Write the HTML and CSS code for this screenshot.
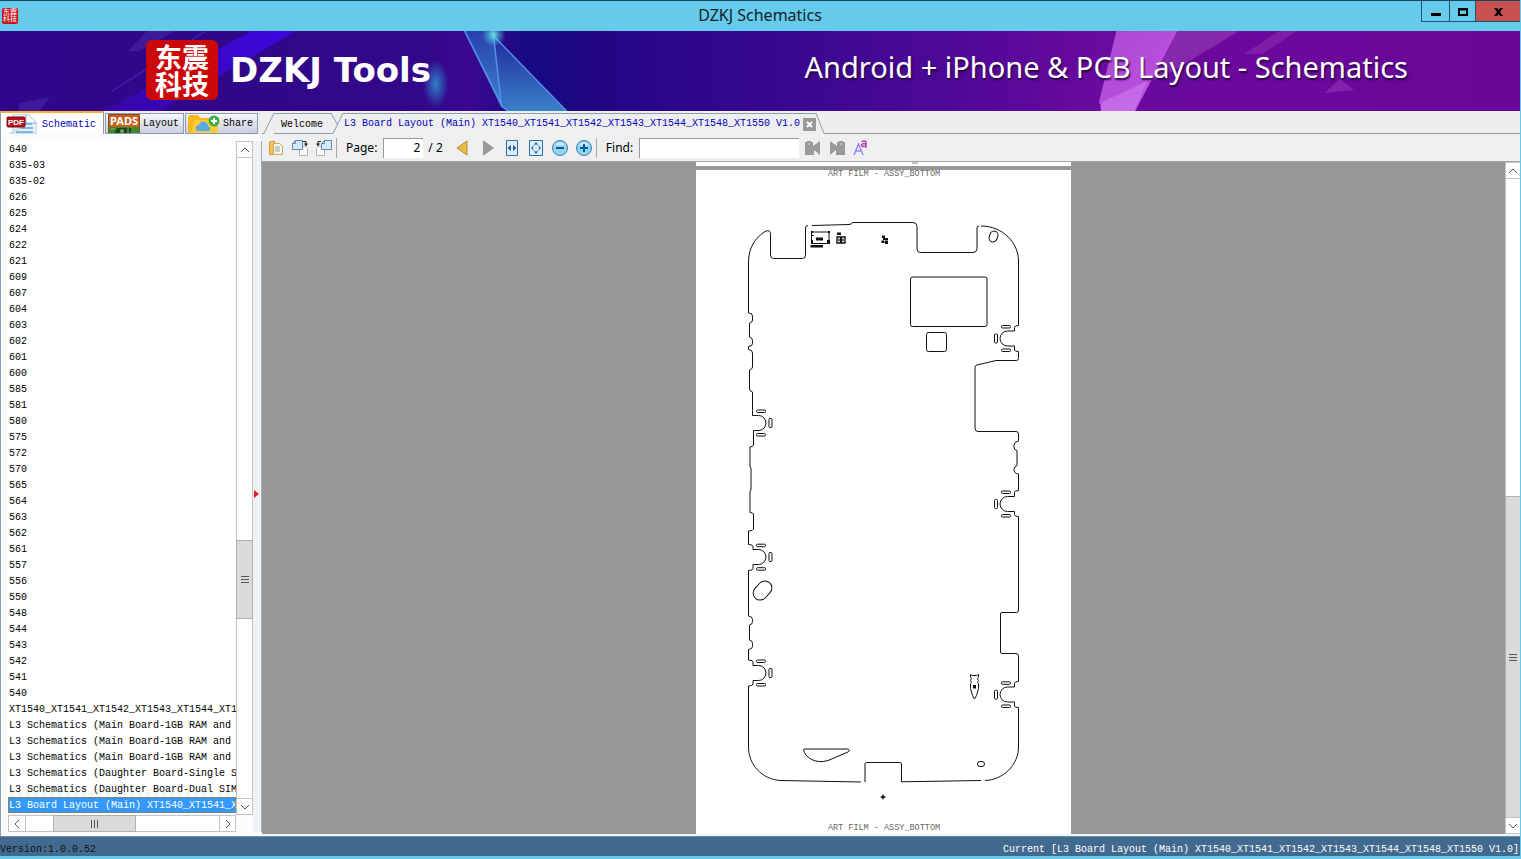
FILE: index.html
```html
<!DOCTYPE html>
<html lang="en">
<head>
<meta charset="utf-8">
<title>DZKJ Schematics</title>
<link rel="stylesheet" href="styles.css">
</head>
<body>
<div class="app">
  <header class="titlebar">
    <span class="app-icon" aria-hidden="true">东震科技</span>
    <h1 class="title">DZKJ Schematics</h1>
    <div class="window-buttons">
      <button class="win min" aria-label="Minimize"><svg width="10" height="9"><path d="M0 6h10v3H0z"/></svg></button>
      <button class="win max" aria-label="Maximize"><svg width="10" height="9"><path d="M0 1h10v8H0zM2 3.500v3.500h6v-3.500z" fill-rule="evenodd"/></svg></button>
      <button class="win close" aria-label="Close"><svg width="9" height="9"><path d="M0 1h3l1.500 2L6 1h3L6 5l3 4H6L4.500 7 3 9H0l3-4z"/></svg></button>
    </div>
  </header>

  <section class="banner">
    <svg class="banner-art" viewBox="0 0 1521 80" preserveAspectRatio="none" aria-hidden="true">
      <defs>
        <linearGradient id="base"><stop offset="0" stop-color="#30078a"/><stop offset=".28" stop-color="#32078a"/><stop offset=".31" stop-color="#3a0890"/><stop offset=".35" stop-color="#160a82"/><stop offset=".39" stop-color="#220684"/><stop offset=".46" stop-color="#2f078c"/><stop offset=".53" stop-color="#3a0890"/><stop offset=".64" stop-color="#520898"/><stop offset=".72" stop-color="#6a0a9e"/><stop offset="1" stop-color="#6a0798"/></linearGradient>
        <linearGradient id="beam" x1="1" y1="0" x2="0" y2="1"><stop offset="0" stop-color="#3e06de"/><stop offset="1" stop-color="#3606a8"/></linearGradient>
        <linearGradient id="shard" x1="0" y1="0" x2="0" y2="1"><stop offset="0" stop-color="#2b3fae"/><stop offset="1" stop-color="#3a86cc"/></linearGradient>
        <linearGradient id="wing" x1="0" y1="0" x2="0" y2="1"><stop offset="0" stop-color="#202a9c"/><stop offset="1" stop-color="#3a80c8"/></linearGradient>
        <linearGradient id="pink" x1="0" y1="0" x2="1" y2="1"><stop offset="0" stop-color="#a948d0"/><stop offset=".6" stop-color="#b94fdc"/><stop offset="1" stop-color="#c96af2"/></linearGradient>
        <radialGradient id="glow"><stop offset="0" stop-color="#2d7fc6"/><stop offset="1" stop-color="#2d7fc6" stop-opacity="0"/></radialGradient>
        <radialGradient id="spark"><stop offset="0" stop-color="#67e3e6"/><stop offset="1" stop-color="#3fb8d8" stop-opacity="0"/></radialGradient>
      </defs>
      <path fill="url(#base)" d="M0 0h1521v80H0z"/>
      <path fill="url(#beam)" d="M252 0h44L160 80H104z"/>
      <path fill="#3e1a98" d="M147 0h28l-35 20h-12zM20 72l30-6-10 14H18z"/>
      <path stroke="#4430b4" fill="none" d="M206 0L112 60"/>
      <ellipse cx="436" cy="53" rx="13" ry="24" fill="url(#glow)"/>
      <path fill="url(#shard)" d="M464 0h29l9 77z"/>
      <path fill="url(#wing)" d="M494 5l73 75h-58l-7-4z"/>
      <path fill="none" stroke="#5790ec" stroke-width="1.500" d="M464-2l39 78 8 6M493-2l9 78M494 5l73 75"/>
      <circle cx="494" cy="4" r="12" fill="url(#spark)"/>
      <path fill="#9a3db8" opacity=".6" d="M1176 0h64l-78 47-40 12z"/>
      <path fill="#8d2bb0" opacity=".6" d="M1280 0h18l-35 23h-18z"/>
      <path fill="url(#pink)" stroke="#b455d8" d="M1118-1h60l-43 82h-33v-9h-2z"/>
      <path fill="#cb7cf0" opacity=".6" d="M1101 72l47-22-13 30h-33z"/>
      <path fill="#8420ac" d="M1341 48l14 11-30 3z"/>
    </svg>
    <div class="brand">
      <span class="brand-seal">东震科技</span>
      <span class="brand-name">DZKJ Tools</span>
    </div>
    <p class="tagline">Android + iPhone &amp; PCB Layout - Schematics</p>
  </section>

  <main class="workspace">
    <aside class="side">
      <nav class="side-tabs">
        <button class="side-tab active">
          <svg width="34" height="20" viewBox="0 0 34 20" aria-hidden="true"><path d="M8 0h15l8 8v12H8z" fill="#e8f1fa" stroke="#b4cce0"/><path d="M21 0v9h10" fill="#fff" stroke="#85b2d8"/><path d="M17 10h10M14 14h14M11 18h17" stroke="#7cb8e0" stroke-width="2"/><path d="M4 20l14-8" stroke="#cfdfea" stroke-width="2"/><rect x="2" y="3" width="18" height="10" rx="1" fill="#b4131a" stroke="#7f0d12"/><text x="3" y="11" class="icon-pdf">PDF</text></svg>
          <span>Schematic</span>
        </button>
        <button class="side-tab">
          <svg width="32" height="19" viewBox="0 0 32 19" aria-hidden="true"><path d="M.500.500h31V19H.500z" fill="#c4601c" stroke="#8e4a1a"/><path d="M1 13h30v6H1z" fill="#3c8a2c"/><path d="M6 19l3-5h16v5z" fill="#24441e"/><circle cx="14" cy="17" r="2" fill="#58b840"/><path d="M20 14v5M24 13v6M3 15h4" stroke="#68c44c"/><text x="2" y="11" class="icon-pads">PADS</text></svg>
          <span>Layout</span>
        </button>
        <button class="side-tab">
          <svg width="32" height="19" viewBox="0 0 32 19" aria-hidden="true"><path d="M0 3q0-2 2-2h8l3 3h12q2 0 2 2v13H2q-2 0-2-2z" fill="#f7b51e"/><path d="M3 19L6 6h24v13z" fill="#fccb3c"/><path d="M10 17q-3-1-2-4 1-2 3-2 2-5 6-3 3 1 3 4 3 1 2 4l-1 1z" fill="#58a9e8"/><circle cx="26" cy="7" r="5.500" fill="#3fae49"/><path d="M23 7h6M26 4v6" stroke="#fff" stroke-width="2"/></svg>
          <span>Share</span>
        </button>
      </nav>
      <div class="side-body">
        <div class="list-area">
          <ul class="list">
            <li><button>640</button></li><li><button>635-03</button></li><li><button>635-02</button></li><li><button>626</button></li><li><button>625</button></li><li><button>624</button></li><li><button>622</button></li><li><button>621</button></li><li><button>609</button></li><li><button>607</button></li><li><button>604</button></li><li><button>603</button></li><li><button>602</button></li><li><button>601</button></li><li><button>600</button></li><li><button>585</button></li><li><button>581</button></li><li><button>580</button></li><li><button>575</button></li><li><button>572</button></li><li><button>570</button></li><li><button>565</button></li><li><button>564</button></li><li><button>563</button></li><li><button>562</button></li><li><button>561</button></li><li><button>557</button></li><li><button>556</button></li><li><button>550</button></li><li><button>548</button></li><li><button>544</button></li><li><button>543</button></li><li><button>542</button></li><li><button>541</button></li><li><button>540</button></li>
            <li><button>XT1540_XT1541_XT1542_XT1543_XT1544_XT1</button></li>
            <li><button>L3 Schematics (Main Board-1GB RAM and</button></li>
            <li><button>L3 Schematics (Main Board-1GB RAM and</button></li>
            <li><button>L3 Schematics (Main Board-1GB RAM and</button></li>
            <li><button>L3 Schematics (Daughter Board-Single S</button></li>
            <li><button>L3 Schematics (Daughter Board-Dual SIM</button></li>
            <li><button class="selected">L3 Board Layout (Main) XT1540_XT1541_X</button></li>
          </ul>
          <div class="hscroll">
            <button aria-label="Scroll left"><svg width="8" height="10"><path d="M6 1L2 5l4 4"/></svg></button>
            <span class="track h-before"></span><span class="thumb h-thumb"><svg width="9" height="8"><path d="M1.500 0v8M4.500 0v8M7.500 0v8"/></svg></span><span class="track h-after"></span>
            <button aria-label="Scroll right"><svg width="8" height="10"><path d="M2 1l4 4-4 4"/></svg></button>
          </div>
        </div>
        <div class="vscroll side-scroll">
          <button aria-label="Scroll up"><svg width="10" height="8"><path d="M1 6l4-4 4 4"/></svg></button>
          <span class="track s-before"></span><span class="thumb s-thumb"><svg width="8" height="9"><path d="M0 1.500h8M0 4.500h8M0 7.500h8"/></svg></span><span class="track s-after"></span>
          <button aria-label="Scroll down"><svg width="10" height="8"><path d="M1 2l4 4 4-4"/></svg></button>
        </div>
        <div class="splitter"><svg width="5" height="8" aria-hidden="true"><path d="M0 0l5 4-5 4z"/></svg></div>
      </div>
    </aside>

    <section class="document">
      <div class="doc-tabs">
        <svg class="slope" width="12" height="22" aria-hidden="true"><path d="M0 21.500h2L12 1"/></svg>
        <button class="doc-tab welcome">Welcome</button>
        <svg class="slope" width="12" height="22" aria-hidden="true"><path d="M0 1l6 11M12 1L2 21.500H0"/></svg>
        <div class="doc-tab current">
          <button class="doc-name">L3 Board Layout (Main) XT1540_XT1541_XT1542_XT1543_XT1544_XT1548_XT1550 V1.0</button>
          <button class="tab-close" aria-label="Close tab"><svg width="7" height="7"><path d="M1 1l5 5M6 1L1 6"/></svg></button>
        </div>
        <svg class="slope" width="10" height="22" aria-hidden="true"><path d="M0 1l8 20.500h2"/></svg>
        <span class="tab-fill"></span>
      </div>

      <div class="toolbar">
        <button class="tool" aria-label="Open"><svg width="16" height="16"><path d="M1.500 2l5-1 1 13-6 1z" fill="#f2c25c" stroke="#d39a35"/><path d="M5.500 3.500h6l3 3v8h-9z" fill="#fbf5e4" stroke="#c9a566"/><path d="M7 7h5M7 9h5M7 11h5" stroke="#8aa"/></svg></button>
        <button class="tool" aria-label="Rotate clockwise"><svg width="16" height="16"><path d="M7.500 6.500h6l2 2v7h-8z" fill="#fff" stroke="#b4b4b4"/><path d="M3.500.500h7v9h-10v-6z" fill="#d6eafc" stroke="#5d87b5"/><path d="M.500 3.500h3v-3" fill="none" stroke="#5d87b5"/><path d="M11 1.500h3V4" stroke="#222" fill="none"/><path d="M12 3.500h4l-2 3z" fill="#222"/></svg></button>
        <button class="tool" aria-label="Rotate counterclockwise"><svg width="16" height="16"><path d="M.500 8.500l2-2h6v9h-8z" fill="#fff" stroke="#b4b4b4"/><path d="M8.500.500h7v9h-10v-6z" fill="#d6eafc" stroke="#5d87b5"/><path d="M5.500 3.500h3v-3" fill="none" stroke="#5d87b5"/><path d="M5 1.500H2V4" stroke="#222" fill="none"/><path d="M0 3.500h4l-2 3z" fill="#222"/></svg></button>
        <span class="divider"></span>
        <label for="page">Page:</label>
        <input id="page" class="page-box" value="2">
        <span class="page-total">/ 2</span>
        <button class="tool" aria-label="Previous page"><svg width="16" height="16"><path d="M11 1v14L1 8z" fill="#e9bd48" stroke="#b98a22"/></svg></button>
        <button class="tool" aria-label="Next page"><svg width="16" height="16"><path d="M3 0l11 8L3 16z" fill="#999"/></svg></button>
        <button class="tool" aria-label="Fit width"><svg width="16" height="16"><path d="M2.500.500h11v15h-11z" fill="#dcefff" stroke="#336ea5"/><path d="M7 5v6L3.500 8zM9 5v6l3.500-3z" fill="#205f98"/></svg></button>
        <button class="tool" aria-label="Fit page"><svg width="16" height="16"><path d="M1.500.500h13v15h-13z" fill="#dcefff" stroke="#336ea5"/><path d="M8 2l2 2.500H6zM8 14l2-2.500H6zM3 8l2-2v4zM13 8l-2-2v4z" fill="#205f98"/><circle cx="8" cy="8" r="3.500" fill="none" stroke="#4e8abb" stroke-dasharray="2 1"/></svg></button>
        <button class="tool" aria-label="Zoom out"><svg width="16" height="16"><circle cx="8" cy="8" r="7.500" fill="#92d3f6" stroke="#397fae"/><path d="M3 5a6 5 0 0 1 10 0" fill="#d3effc"/><path d="M4 8h8" stroke="#0b5b91" stroke-width="2"/></svg></button>
        <button class="tool" aria-label="Zoom in"><svg width="16" height="16"><circle cx="8" cy="8" r="7.500" fill="#92d3f6" stroke="#397fae"/><path d="M3 5a6 5 0 0 1 10 0" fill="#d3effc"/><path d="M4 8h8M8 4v8" stroke="#0b5b91" stroke-width="2"/></svg></button>
        <span class="divider"></span>
        <label for="find">Find:</label>
        <input id="find" class="find-box">
        <button class="tool" aria-label="Find previous"><svg width="16" height="16"><path d="M0 2h2V1h4v1h2v4l7-5v14l-6-5v5H0z" fill="#999"/><path d="M3 4h2" stroke="#ddd"/></svg></button>
        <button class="tool" aria-label="Find next"><svg width="16" height="16"><path d="M1 1l7 5V2h2V1h4v1h2v13H7v-5l-6 5z" fill="#999"/><path d="M11 4h2" stroke="#ddd"/></svg></button>
        <button class="tool" aria-label="Match case"><svg width="16" height="16"><path d="M1 15L5.500 4 10 15M3 11h5" fill="none" stroke="#9188f0" stroke-width="1.500"/><path d="M8.500 2q3-2 4.500 0v6M13 4q-5-1-4.500 1.500 1.500 2 4.500 0" fill="none" stroke="#bd3fb0" stroke-width="1.500"/></svg></button>
      </div>

      <div class="viewer">
        <div class="pages">
          <div class="page previous"><svg width="6" height="2" aria-hidden="true"><path d="M0 1h6" stroke="#888"/></svg></div>
          <svg class="page sheet" viewBox="0 0 750 1328" preserveAspectRatio="xMidYMin meet" role="img" aria-label="Board assembly, bottom side">
            <text class="film" x="376" y="11">ART FILM - ASSY_BOTTOM</text>
            <text class="film" x="376" y="1319">ART FILM - ASSY_BOTTOM</text>
            <g class="board" transform="scale(2) translate(-696 -170)">
              <path d="M748.500 313V262C748.500 248 755 238 765 231.500q5-2.500 5.500 2V255q0 3.500 3 3.500h29q3 0 3-3V228q0-2.500 2.500-2.500M812 225.500l37-1q3 0 3.500-2H913q4 0 4 4V249q0 3.500 3.500 3.500H973q4 0 4-4V228q0-2 2-2"/>
              <path d="M981 226C1003 226 1018.500 243 1018.500 261V325.500q-4 0-4 2v3.500h-7a7.500 7.500 0 0 0 0 15h7v4q0 1.500 4 1.500v7q0 2-2 2H996L977 365q-2 .5-2 2.500V428q0 3.500 3 3.500h38q2.500 0 2.500 2.500v7q-4.500 1-4.500 4v2q0 3 3 3.500v15q-3 1-3 4 0 4 4.500 4.500V490.500q-4 0-4 2v4h-7a7.500 7.500 0 0 0 0 15h7v3q0 2 4 2V610q0 2.500-2 2.500H1002q-1.500 0-1.500 1.500V652q0 1.500 1.500 1.500h14q2.500 0 2.500 2.500V681.500q-4 0-4 2v3.500h-7a7.500 7.500 0 0 0 0 15h7v4q0 1.500 4 1.500V747C1018.500 765 1003 780 985 780.500"/>
              <path d="M981 780.500L901.500 781.800V764q0-1.500-2-1.500H866.500q-1.500 0-1.500 1.500V782M861 782L780 780.500C762 779 748.500 765 748.500 747V686q4 0 4.500-2v-3.500h5.500a7.500 7.500 0 0 0 0-15h-5.500v-3.500q0-2-4.500-2V649.500q4-.5 4-3v-3q0-3-3-3.500v-15q3-.5 3-3.500v-2q0-3-4-3.500V570.500q4.500 0 4.500-2v-4h5.500a7.500 7.500 0 0 0 0-15h-5.500v-3q0-2-4.500-2V531q4.500 0 5-2V514q0-1-3.500-1.500V491l1-1V468l-1-1V447q3.500-.5 3.500-2V430.500h5a7.500 7.500 0 0 0 0-15h-6v-5L752.500 392q-3-1-3-3V370q3-1 3-3V353q0-3-4-3.500v-3q4 0 4-3v-3q0-3-3-3.500v-14q3-.5 3-3v-4q0-3-4-3"/>
              <rect x="910.500" y="277" width="76.500" height="49.500" rx="2"/>
              <rect x="926.500" y="332.500" width="20" height="19" rx="2"/>
              <rect x="989.500" y="231" width="8" height="11" rx="4" transform="rotate(20 993.500 236.500)"/>
              <rect x="755.500" y="580" width="14" height="21" rx="7" transform="rotate(42 762.500 590.500)"/>
              <path d="M804 749H848q3 1 0 3L828 760.500C815 764.500 805 757 803.500 750q0-1 .5-1z"/>
              <rect x="977.500" y="761.500" width="7" height="5" rx="2.500"/>
              <g>
                <rect x="756.500" y="410" width="9" height="2.500" rx="1"/><rect x="756.500" y="433.500" width="9" height="2.500" rx="1"/><rect x="769" y="418.500" width="3" height="9" rx="1"/>
                <rect x="756.500" y="544.200" width="9" height="2.500" rx="1"/><rect x="756.500" y="567.700" width="9" height="2.500" rx="1"/><rect x="769" y="552.500" width="3" height="9" rx="1"/>
                <rect x="756.500" y="660" width="9" height="2.500" rx="1"/><rect x="756.500" y="683.500" width="9" height="2.500" rx="1"/><rect x="769" y="668.500" width="3" height="9" rx="1"/>
                <rect x="1001.500" y="325.500" width="9" height="2.500" rx="1"/><rect x="1001.500" y="349" width="9" height="2.500" rx="1"/><rect x="994.500" y="334" width="3" height="9" rx="1"/>
                <rect x="1001.500" y="491" width="9" height="2.500" rx="1"/><rect x="1001.500" y="514.500" width="9" height="2.500" rx="1"/><rect x="994.500" y="499.500" width="3" height="9" rx="1"/>
                <rect x="1001.500" y="681.800" width="9" height="2.500" rx="1"/><rect x="1001.500" y="705" width="9" height="2.500" rx="1"/><rect x="994.500" y="690.200" width="3" height="9" rx="1"/>
              </g>
              <path d="M970.500 674.500l2 1h4l2-1v3l-1 1 1 2-1 2 1 1v5l-2 7-2 3.500-2-3.500-2-7v-5l1-1-1-2 1-2-1-1z"/>
              <rect class="solid" x="973" y="685" width="3" height="3.500"/>
              <rect x="811.500" y="232" width="17.500" height="11.500"/>
              <path class="solid" d="M811 231h2v2h-2zM828 231h2v2h-2zM811 240h2v4h-2zM827 240h3v4h-3zM812 235h2v1h-2zM816 237.500h7v3h-7zM810.500 245h12.500v2.500h-12.500zM837 232.500h4v2.500h-4zM882 235.500h3v2.500h-3zM883 238h5v2h-5zM881.500 240.500h3v2.500h-3zM885 240.500h3v3.500h-3z"/>
              <path d="M837 237h3.500v6H837zM841.500 237h3.500v6h-3.500zM838 240h1.500M842.500 240h1.500" stroke-width="1.400"/>
              <path class="solid" d="M883 794l1 2 2 1-2 1-1 2-1-2-2-1 2-1z"/>
            </g>
          </svg>
        </div>
        <div class="vscroll doc-scroll">
          <button aria-label="Scroll up"><svg width="10" height="8"><path d="M1 6l4-4 4 4"/></svg></button>
          <span class="track d-before"></span><span class="thumb d-thumb"><svg width="8" height="9"><path d="M0 1.500h8M0 4.500h8M0 7.500h8"/></svg></span>
          <button aria-label="Scroll down"><svg width="10" height="8"><path d="M1 2l4 4 4-4"/></svg></button>
        </div>
      </div>
    </section>
  </main>

  <footer class="statusbar">
    <span class="version">Version:1.0.0.52</span>
    <span>Current [L3 Board Layout (Main) XT1540_XT1541_XT1542_XT1543_XT1544_XT1548_XT1550 V1.0]</span>
  </footer>
</div>
</body>
</html>
```
FILE: styles.css
```css
* { box-sizing: border-box; }
body { margin: 0; background: #66caea; }
button { margin: 0; padding: 0; border: 0; background: none; color: inherit; font: inherit; cursor: pointer; }
svg { display: block; flex: none; }

.app {
  display: flex;
  flex-direction: column;
  height: 100vh;
  overflow: hidden;
  border-right: 1px solid #66caea;
  font: 10px/16px "Liberation Mono", monospace;
  color: #000;
}

/* Title bar */
.titlebar {
  display: grid;
  grid-template-columns: 1fr auto 1fr;
  flex: none;
  height: 31px;
  border-top: 1px solid #184860;
  background: #66caea;
}
.app-icon {
  align-self: center;
  width: 16px;
  height: 16px;
  margin-left: 2px;
  border-radius: 2px;
  background: #c81018;
  color: #fff;
  font: 7px/7px "Noto Sans CJK SC", sans-serif;
  text-align: center;
}
.title {
  margin: 0;
  color: #10232c;
  font: 16px/29px "Noto Sans", sans-serif;
}
.window-buttons { display: flex; justify-self: end; height: 21px; }
.win {
  display: flex;
  align-items: center;
  justify-content: center;
  border: 1px solid #20506a;
  border-top: 0;
  border-right: 0;
}
.min { width: 28px; }
.max { width: 26px; }
.close { width: 45px; background: #c75050; }

/* Banner */
.banner {
  position: relative;
  display: flex;
  flex: none;
  align-items: center;
  justify-content: space-between;
  height: 80px;
  padding: 0 112px 2px 146px;
  overflow: hidden;
  color: #fff;
}
.banner-art { position: absolute; inset: 0; width: 100%; height: 100%; }
.brand { position: relative; display: flex; align-items: center; gap: 12px; }
.brand-seal {
  width: 72px;
  height: 60px;
  padding: 3px 0;
  border-radius: 6px;
  background: #cc0808;
  font: bold 27px/27px "Noto Sans CJK SC", sans-serif;
  text-align: center;
}
.brand-name { font: bold 34px/40px "DejaVu Sans", sans-serif; }
.tagline {
  position: relative;
  margin: 0 0 6px;
  font: 29px/36px "Noto Sans", sans-serif;
  text-shadow: 1px 2px 2px #240040;
}

/* Workspace */
.workspace { display: flex; flex: 1; min-height: 0; background: #eef1f4; }
.side { display: flex; flex-direction: column; flex: none; width: 262px; border-left: 1px solid #8ba0b5; background: #fbfcfd; }
.side-tabs { display: flex; flex: none; align-items: flex-end; gap: 1px; height: 23px; background: #eee; }
.side-tab {
  display: flex;
  align-items: flex-end;
  gap: 3px;
  height: 21px;
  padding: 0 4px 0 2px;
  border: 1px solid #8b9bb2;
  background: linear-gradient(#f6f7fa, #c9cee0);
}
.side-tab span { line-height: 19px; }
.side-tab.active {
  height: 23px;
  padding: 0 7px 0 4px;
  border: 0;
  border-top: 2px solid #ffac38;
  border-right: 1px solid #8b9bb2;
  background: #fff;
  color: #0000b8;
}
.icon-pdf { fill: #fff; font: bold 8px "Liberation Sans", sans-serif; }
.icon-pads { fill: #fff; font: bold 11px "Noto Sans", sans-serif; }
.side-body { display: flex; flex: 1; min-height: 0; padding: 7px 0 4px 7px; }
.list-area { display: flex; flex: 1; flex-direction: column; min-width: 0; }
.list { flex: 1; min-height: 0; margin: 0; padding: 0; overflow: hidden; list-style: none; background: #fff; }
.list button {
  display: block;
  width: 100%;
  height: 16px;
  padding: 1px 0 0 1px;
  overflow: hidden;
  text-align: left;
  white-space: nowrap;
}
.list .selected { outline: 1px dotted #c06a10; outline-offset: -1px; background: #3399ff; color: #fff; }

/* Scroll bars */
.hscroll, .vscroll { display: flex; flex: none; background: #fff; }
.vscroll { flex-direction: column; width: 17px; border: 1px solid #c0c4c8; }
.hscroll { height: 17px; border: 1px solid #c0c4c8; border-right: 0; }
.hscroll button, .vscroll button, .thumb { display: flex; align-items: center; justify-content: center; }
.vscroll button { flex: none; height: 16px; border-bottom: 1px solid #c0c4c8; }
.vscroll button:last-child { border-top: 1px solid #c0c4c8; border-bottom: 0; }
.hscroll button { flex: none; width: 17px; border-right: 1px solid #c0c4c8; }
.hscroll button:last-child { border-left: 1px solid #c0c4c8; }
.vscroll path, .hscroll path { fill: none; stroke: #555; }
.thumb { background: #dadada; outline: 1px solid #b0b0b0; }
.h-before { flex: 28; }
.h-thumb { flex: 82; }
.h-after { flex: 84; }
.s-before { flex: 384; }
.s-thumb { flex: 77; }
.s-after { flex: 180; }
.d-before { flex: 320; }
.d-thumb { flex: 322; }
.side-scroll { margin-bottom: 17px; }
.splitter { display: flex; align-items: center; width: 9px; padding: 14px 0 0 1px; border-right: 1px solid #a0acb8; background: #f0f2f5; }
.splitter path { fill: #e0201c; }

/* Document tabs */
.document { display: flex; flex: 1; flex-direction: column; min-width: 0; }
.doc-tabs { display: flex; flex: none; align-items: flex-start; height: 23px; padding-top: 1px; background: #eee; }
.slope path { fill: none; stroke: #8b9eaa; }
.doc-tab { height: 21px; margin-top: 1px; border-top: 1px solid #8b9eaa; }
.welcome { padding: 1px 8px 0 7px; border-bottom: 1px solid #8b9eaa; line-height: 19px; }
.current { display: flex; align-items: center; gap: 3px; padding-left: 1px; }
.doc-name { color: #0000c0; white-space: nowrap; }
.tab-close { display: flex; align-items: center; justify-content: center; width: 13px; height: 13px; background: #999; }
.tab-close path { stroke: #fff; stroke-width: 2; }
.tab-fill { flex: 1; height: 22px; border-bottom: 1px solid #929ba0; }

/* Toolbar */
.toolbar {
  display: flex;
  flex: none;
  align-items: center;
  gap: 8px;
  height: 27px;
  padding-left: 6px;
  background: #eeeff0;
  font: 12px/20px "Noto Sans", sans-serif;
}
.tool { flex: none; width: 16px; height: 16px; }
.divider { width: 1px; height: 20px; margin-left: -4px; background: #a8a8a8; }
.divider + label { margin-left: 1px; }
.page-box, .find-box {
  height: 20px;
  margin: 0;
  padding: 0 3px;
  border: 0;
  border-top: 1px solid #999;
  border-left: 1px solid #999;
  border-radius: 0;
  background: #fff;
  font: inherit;
}
.page-box { width: 40px; margin-left: -2px; text-align: right; }
.find-box { width: 160px; margin-left: -2px; margin-right: -2px; }
.page-total { margin: 0 5px 0 -3px; }

/* Viewer */
.viewer { display: flex; flex: 1; min-height: 0; border-top: 1px solid #a0a8ac; border-bottom: 2px solid #eef4f8; background: #989898; }
.pages { display: flex; flex: 1; flex-direction: column; align-items: center; gap: 4px; min-width: 0; overflow: hidden; }
.page { width: 375px; max-width: 100%; background: #fff; }
.previous { flex: none; height: 4px; padding-left: 216px; }
.sheet { flex: 1; min-height: 0; }
.film { fill: #666; font: 17px "Liberation Mono", monospace; text-anchor: middle; }
.board { fill: none; stroke: #111; }
.solid { fill: #111; stroke: none; }
.doc-scroll { width: 15px; border-right: 0; }

/* Status bar */
.statusbar {
  display: flex;
  flex: none;
  justify-content: space-between;
  height: 23px;
  padding: 5px 1px 0 0;
  border-top: 1px solid #6f8ca4;
  border-bottom: 3px solid #66caea;
  background: #426a8e;
  color: #fff;
}
.version { color: #111; }
```
